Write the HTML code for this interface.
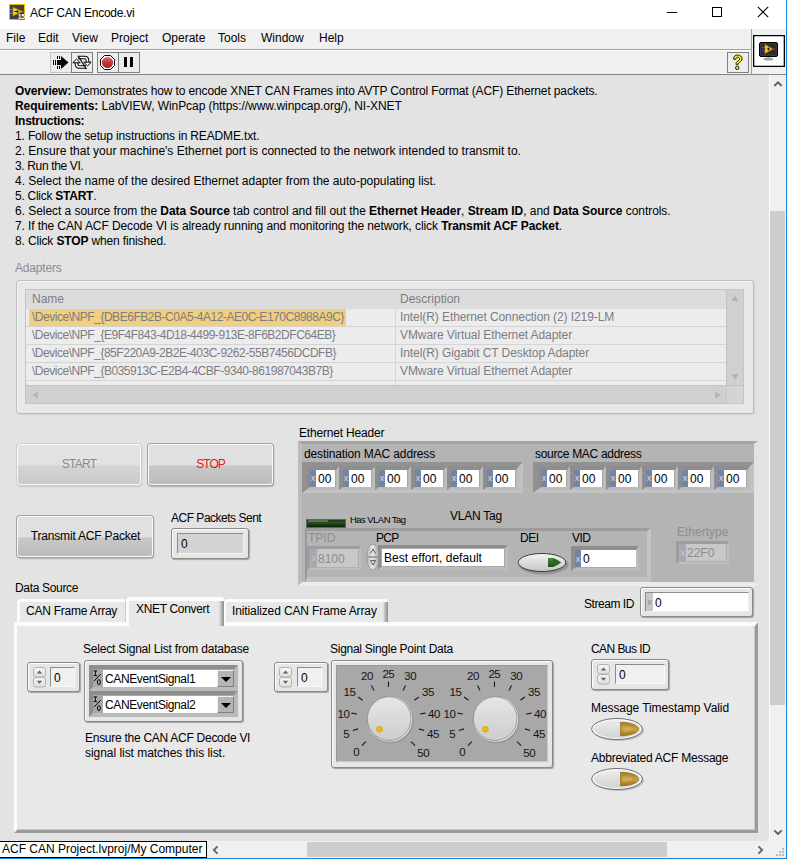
<!DOCTYPE html>
<html><head><meta charset="utf-8">
<style>
*{margin:0;padding:0;box-sizing:border-box}
html,body{width:787px;height:859px;overflow:hidden;background:#fff}
body{position:relative;font-family:"Liberation Sans",sans-serif;font-size:12px;color:#000}
.a{position:absolute}
.t{position:absolute;white-space:nowrap;line-height:15px}
b{font-weight:bold}
.btn{border:1px solid #fafafa;border-radius:3px;background:linear-gradient(#e0e0e0 0,#e0e0e0 52%,#c8c8c8 53%,#bcbcbc 100%);box-shadow:0 0 0 1px #a0a0a0,1px 2px 2px #b0b0b0}
.btn.dis{background:linear-gradient(#e2e2e2 0,#e2e2e2 52%,#d4d4d4 53%,#cacaca 100%);box-shadow:0 0 0 1px #cccccc,1px 2px 2px #c8c8c8}
.frm{border:1px solid #8a8a8a;border-radius:3px;background:#e6e6e6;box-shadow:inset 1px 1px 0 #fff,1px 1px 1px #a0a0a0}
.sunk4{background:#a8a8a8;border:4px solid #8e8e8e;border-right-color:#bababa;border-bottom-color:#bababa}
.sunk{background:#a8a8a8;border:2px solid #989898;border-right-color:#c0c0c0;border-bottom-color:#c0c0c0}

.tab{background:#e8e8e8;border-top:3px solid #fcfcfc;border-left:3px solid #fcfcfc;border-radius:4px 3px 0 0}
.fld{background:#f0f0f0;border:1px solid #8c8c8c;border-right-color:#f8f8f8;border-bottom-color:#f8f8f8}
.dd{width:17px;height:17px;background:#b4b4b4;border:1px solid #f0f0f0;border-right-color:#808080;border-bottom-color:#808080}
.dd:after{content:"";position:absolute;left:3px;top:6px;border-left:5px solid transparent;border-right:5px solid transparent;border-top:5px solid #000}
.io{font-family:"Liberation Serif",serif;font-size:9px;line-height:8px;width:10px;height:17px}
.sw{width:53px;height:22px;border-radius:50%;background:linear-gradient(#f4f4f4,#d0d0d0);border:1px solid #6a6a6a;box-shadow:1px 2px 2px #a0a0a0}
.sw i{position:absolute;left:29px;top:3px;width:19px;height:14px;border-radius:0 50% 50% 0;background:linear-gradient(#d8b050,#b08020);border:1px solid #8a6a20}
.rx{color:#dcdcdc;font-size:9px;line-height:18px;text-align:center}
.arr{background:#a8a8a8;border:4px solid #929292;border-right-color:#c2c2c2;border-bottom:3px solid #c2c2c2}
.mac{height:24px;background:#a8a8a8;border:4px solid #8e8e8e;border-right:3px solid #bcbcbc;border-bottom:3px solid #bcbcbc}
.mac i{position:absolute;left:0;top:0;width:6px;height:17px;background:#7484a4;color:#dcdcdc;font-style:normal;font-size:9px;line-height:17px;text-align:center}
.mac span{position:absolute;left:6px;top:0;height:17px;background:#fff;line-height:19px;padding-left:2px;overflow:hidden}
</style></head><body>
<!-- title bar -->
<div class="a" style="left:0;top:0;width:787px;height:29px;background:#fff"></div>
<svg class="a" style="left:9px;top:4px" width="16" height="16">
<rect x="0.5" y="0.5" width="15" height="15" fill="#404040" stroke="#f0b800"/>
<rect x="1" y="5" width="3" height="1.3" fill="#3a7ad8"/><rect x="1" y="8.5" width="3" height="1.3" fill="#3a7ad8"/>
<rect x="12.5" y="6.8" width="3" height="1.3" fill="#3a7ad8"/>
<path d="M4 3.2L13 7.5L4 11.8Z" fill="#f8d030" stroke="#c89000" stroke-width=".7"/>
<path d="M5.5 7.5H9M8 6.2L9.3 7.5L8 8.8" stroke="#000" stroke-width=".9" fill="none"/>
<rect x="8.5" y="10" width="7" height="5.5" fill="#404040"/>
<text x="8.7" y="15.3" font-family="Liberation Sans" font-size="6.8" font-weight="bold" letter-spacing="-.3" fill="#fff">15</text>
</svg>
<div class="t" style="left:30px;top:6px;font-size:12px;letter-spacing:-0.25px">ACF CAN Encode.vi</div>
<div class="a" style="left:667px;top:12px;width:10px;height:1px;background:#000"></div>
<div class="a" style="left:712px;top:7px;width:10px;height:10px;border:1px solid #000"></div>
<svg class="a" style="left:757px;top:6px" width="12" height="12"><path d="M0.8 0.8L11.2 11.2M11.2 0.8L0.8 11.2" stroke="#000" stroke-width="1.1"/></svg>
<!-- menu bar -->
<div class="a" style="left:0;top:29px;width:787px;height:46px;background:#f0f0f0"></div>
<div class="t" style="left:6px;top:31px;font-size:12px">File</div>
<div class="t" style="left:38px;top:31px;font-size:12px">Edit</div>
<div class="t" style="left:72px;top:31px;font-size:12px">View</div>
<div class="t" style="left:111px;top:31px;font-size:12px">Project</div>
<div class="t" style="left:162px;top:31px;font-size:12px">Operate</div>
<div class="t" style="left:218px;top:31px;font-size:12px">Tools</div>
<div class="t" style="left:261px;top:31px;font-size:12px">Window</div>
<div class="t" style="left:319px;top:31px;font-size:12px">Help</div>
<div class="a" style="left:0;top:49px;width:751px;height:1px;background:#a0a0a0"></div>
<div class="a" style="left:751px;top:29px;width:1px;height:46px;background:#a0a0a0"></div>
<div class="a" style="left:0;top:50px;width:751px;height:1px;background:#fcfcfc"></div>
<div class="a" style="left:0;top:74px;width:787px;height:1px;background:#858585"></div>
<!-- toolbar -->
<div class="a" style="left:50px;top:52px;width:22px;height:21px;border:1px solid #c4c4c4;background:#ececec"></div>
<div class="a" style="left:71px;top:52px;width:22px;height:21px;border:1px solid #7c7c7c;background:#ececec"></div>
<div class="a" style="left:97px;top:52px;width:22px;height:21px;border:1px solid #808080;background:#ececec"></div>
<div class="a" style="left:118px;top:52px;width:22px;height:21px;border:1px solid #808080;background:#ececec"></div>
<svg class="a" style="left:50px;top:52px" width="22" height="21">
<rect x="3" y="8" width="1" height="5" fill="#000"/><rect x="5" y="8" width="1" height="5" fill="#000"/>
<rect x="7" y="8" width="4" height="5" fill="#000"/>
<rect x="7" y="4" width="1" height="3" fill="#000"/><rect x="9" y="4" width="1" height="3" fill="#000"/>
<rect x="7" y="14" width="1" height="3" fill="#000"/><rect x="9" y="14" width="1" height="3" fill="#000"/>
<path d="M11 4L18.5 10.5L11 17Z" fill="#000"/>
</svg>
<svg class="a" style="left:71px;top:52px" width="22" height="21">
<path d="M7 5.5H13.5Q16.5 5.5 16.5 8.5V10" fill="none" stroke="#000" stroke-width="3.6"/>
<path d="M7 5.5H13.5Q16.5 5.5 16.5 8.5V10" fill="none" stroke="#fff" stroke-width="1.6"/>
<path d="M12.8 10.2H20.2L16.5 13.8Z" fill="#fff" stroke="#000" stroke-width="1"/>
<path d="M15 15H8.5Q5.5 15 5.5 12V10.8" fill="none" stroke="#000" stroke-width="3.6"/>
<path d="M15 15H8.5Q5.5 15 5.5 12V10.8" fill="none" stroke="#fff" stroke-width="1.6"/>
<path d="M1.8 10.8H9.2L5.5 7.2Z" fill="#fff" stroke="#000" stroke-width="1"/>
<path d="M7 4L15.5 17" stroke="#000" stroke-width="1.2"/>
</svg>
<svg class="a" style="left:97px;top:52px" width="22" height="21">
<defs><linearGradient id="rg" x1="0" y1="0" x2="0" y2="1"><stop offset="0" stop-color="#e07070"/><stop offset=".5" stop-color="#c03838"/><stop offset="1" stop-color="#a82020"/></linearGradient></defs>
<path d="M7.5 3.5H13.5L17.5 7.5V13.5L13.5 17.5H7.5L3.5 13.5V7.5Z" fill="#fff" stroke="#000" stroke-width="1"/>
<circle cx="10.5" cy="10.5" r="5.6" fill="url(#rg)"/>
</svg>
<svg class="a" style="left:118px;top:52px" width="22" height="21">
<rect x="6" y="5" width="3" height="10" fill="#000"/><rect x="12" y="5" width="3" height="10" fill="#000"/>
</svg>
<div class="a" style="left:727px;top:52px;width:22px;height:21px;border:1px solid #808080;background:#ececec"></div>
<svg class="a" style="left:727px;top:52px" width="22" height="21">
<path d="M6.5 7.2C6.5 4.5 8.3 3 10.7 3C13.2 3 15 4.5 15 6.8C15 8.8 13.6 9.7 12.4 10.4C11.6 10.9 11.3 11.3 11.3 12.3H9C9 10.8 9.4 10 10.8 9.1C11.9 8.4 12.6 7.9 12.6 6.9C12.6 5.9 11.9 5.2 10.7 5.2C9.5 5.2 8.9 6 8.9 7.2Z" fill="#ffff00" stroke="#000" stroke-width=".9"/>
<circle cx="10.2" cy="15.8" r="1.7" fill="#ffff00" stroke="#000" stroke-width=".9"/>
</svg>
<div class="a" style="left:753px;top:35px;width:32px;height:32px;border:1px solid #000;box-shadow:inset 0 0 0 .3px #000;background:#fff"></div>
<svg class="a" style="left:753px;top:35px" width="32" height="32">
<ellipse cx="15.5" cy="24" rx="5" ry="1.6" fill="#a0a0a0"/>
<rect x="14" y="21" width="3" height="3" fill="#b0b0b0"/>
<rect x="6.5" y="7.5" width="18" height="14" rx="1.5" fill="#3a3a3a" stroke="#000" stroke-width="1"/>
<rect x="8" y="9" width="15" height="10.5" fill="#2c2c2c"/>
<rect x="9" y="12" width="3" height="1" fill="#e02020"/><rect x="9" y="15" width="3" height="1" fill="#2040e0"/>
<rect x="19" y="13.5" width="3" height="1" fill="#e02020"/>
<path d="M12 9.5L19.5 14L12 18.5Z" fill="#f8c020" stroke="#e09000" stroke-width=".6"/>
<path d="M14 14H17M15.5 12.5V15.5" stroke="#000" stroke-width=".8"/>
</svg>
<!-- panel -->
<div class="a" style="left:0;top:75px;width:769px;height:766px;background:#e3e3e3"></div>
<!-- scrollbars -->
<div class="a" style="left:769px;top:75px;width:17px;height:783px;background:#f0f0f0;border-left:1px solid #fcfcfc"></div>
<div class="a" style="left:770px;top:211px;width:15px;height:494px;background:#cdcdcd"></div>
<svg class="a" style="left:773px;top:80px" width="10" height="8"><path d="M1.3 6L5 2.3L8.7 6" fill="none" stroke="#606060" stroke-width="1.8"/></svg>
<svg class="a" style="left:773px;top:829px" width="10" height="8"><path d="M1.3 1.3L5 5L8.7 1.3" fill="none" stroke="#606060" stroke-width="1.8"/></svg>
<div class="a" style="left:0;top:841px;width:786px;height:17px;background:#f0f0f0"></div>
<div class="a" style="left:307px;top:842px;width:360px;height:15px;background:#cdcdcd"></div>
<svg class="a" style="left:211px;top:845px" width="8" height="10"><path d="M6.5 1.3L2.8 5L6.5 8.7" fill="none" stroke="#606060" stroke-width="1.8"/></svg>
<svg class="a" style="left:757px;top:845px" width="8" height="10"><path d="M1.5 1.3L5.2 5L1.5 8.7" fill="none" stroke="#606060" stroke-width="1.8"/></svg>
<svg class="a" style="left:774px;top:846px" width="12" height="12"><g fill="#b8b8b8"><rect x="8" y="2" width="2" height="2"/><rect x="5" y="5" width="2" height="2"/><rect x="8" y="5" width="2" height="2"/><rect x="2" y="8" width="2" height="2"/><rect x="5" y="8" width="2" height="2"/><rect x="8" y="8" width="2" height="2"/></g></svg>
<div class="a" style="left:786px;top:0;width:1px;height:859px;background:#1883d7"></div>
<div class="a" style="left:0;top:858px;width:787px;height:1px;background:#1883d7"></div>

<!-- description -->
<div class="t" style="left:15px;top:84px;letter-spacing:-0.13px"><b>Overview:</b> Demonstrates how to encode XNET CAN Frames into AVTP Control Format (ACF) Ethernet packets.</div>
<div class="t" style="left:15px;top:99px;letter-spacing:-0.06px"><b>Requirements:</b> LabVIEW, WinPcap (https://www.winpcap.org/), NI-XNET</div>
<div class="t" style="left:15px;top:114px;letter-spacing:-0.26px"><b>Instructions:</b></div>
<div class="t" style="left:15px;top:129px;letter-spacing:-0.15px">1. Follow the setup instructions in README.txt.</div>
<div class="t" style="left:15px;top:144px;letter-spacing:-0.00px">2. Ensure that your machine's Ethernet port is connected to the network intended to transmit to.</div>
<div class="t" style="left:15px;top:159px;letter-spacing:-0.35px">3. Run the VI.</div>
<div class="t" style="left:15px;top:174px;letter-spacing:-0.03px">4. Select the name of the desired Ethernet adapter from the auto-populating list.</div>
<div class="t" style="left:15px;top:189px;letter-spacing:-0.26px">5. Click <b>START</b>.</div>
<div class="t" style="left:15px;top:204px;letter-spacing:-0.05px">6. Select a source from the <b>Data Source</b> tab control and fill out the <b>Ethernet Header</b>, <b>Stream ID</b>, and <b>Data Source</b> controls.</div>
<div class="t" style="left:15px;top:219px;letter-spacing:-0.10px">7. If the CAN ACF Decode VI is already running and monitoring the network, click <b>Transmit ACF Packet</b>.</div>
<div class="t" style="left:15px;top:234px;letter-spacing:-0.14px">8. Click <b>STOP</b> when finished.</div>


<!-- adapters -->
<div class="t" style="left:15px;top:261px;color:#8c8c8c;letter-spacing:-0.17px">Adapters</div>
<div class="a" style="left:16px;top:280px;width:738px;height:134px;background:#e8e8e8;border:1px solid #bdbdbd;border-radius:3px;box-shadow:inset 1px 1px 0 #f6f6f6, 1px 1px 1px #d0d0d0"></div>
<div class="a" style="left:25px;top:289px;width:719px;height:115px;background:#ececec;border:1px solid #c4c4c4"></div>
<div class="a" style="left:26px;top:290px;width:700px;height:19px;background:#dcdcdc"></div>
<div class="a" style="left:29px;top:309px;width:317px;height:17px;background:#f0d080"></div>
<div class="a" style="left:26px;top:326px;width:700px;height:1px;background:#d4d4d4"></div>
<div class="a" style="left:26px;top:344px;width:700px;height:1px;background:#d4d4d4"></div>
<div class="a" style="left:26px;top:362px;width:700px;height:1px;background:#d4d4d4"></div>
<div class="a" style="left:26px;top:380px;width:700px;height:1px;background:#d4d4d4"></div>
<div class="a" style="left:395px;top:309px;width:1px;height:76px;background:#d4d4d4"></div>
<div class="a" style="left:726px;top:290px;width:17px;height:95px;background:#d0d0d0;border-left:1px solid #c4c4c4"></div>
<div class="a" style="left:26px;top:385px;width:717px;height:18px;background:#d0d0d0;border-top:1px solid #c4c4c4"></div>
<div class="a" style="left:726px;top:385px;width:17px;height:18px;background:#d4d4d4;border-left:1px solid #c4c4c4;border-top:1px solid #c4c4c4"></div>
<svg class="a" style="left:730px;top:294px" width="10" height="8"><path d="M5 1L8.5 7H1.5Z" fill="#b4b4b4"/></svg>
<svg class="a" style="left:730px;top:373px" width="10" height="8"><path d="M5 7L8.5 1H1.5Z" fill="#b4b4b4"/></svg>
<svg class="a" style="left:31px;top:390px" width="8" height="10"><path d="M1 5L7 1.5V8.5Z" fill="#b4b4b4"/></svg>
<svg class="a" style="left:714px;top:390px" width="8" height="10"><path d="M7 5L1 1.5V8.5Z" fill="#b4b4b4"/></svg>
<div class="t" style="left:32px;top:292px;color:#7c7c84">Name</div>
<div class="t" style="left:400px;top:292px;color:#7c7c84">Description</div>
<div class="t" style="left:32px;top:310px;color:#7c7c84;letter-spacing:-0.47px">\Device\NPF_{DBE6FB2B-C0A5-4A12-AE0C-E170C8988A9C}</div>
<div class="t" style="left:32px;top:328px;color:#7c7c84;letter-spacing:-0.47px">\Device\NPF_{E9F4F843-4D18-4499-913E-8F6B2DFC64EB}</div>
<div class="t" style="left:32px;top:346px;color:#7c7c84;letter-spacing:-0.47px">\Device\NPF_{85F220A9-2B2E-403C-9262-55B7456DCDFB}</div>
<div class="t" style="left:32px;top:364px;color:#7c7c84;letter-spacing:-0.47px">\Device\NPF_{B035913C-E2B4-4CBF-9340-861987043B7B}</div>
<div class="t" style="left:400px;top:310px;color:#7c7c84;letter-spacing:-0.08px">Intel(R) Ethernet Connection (2) I219-LM</div>
<div class="t" style="left:400px;top:328px;color:#7c7c84;letter-spacing:-0.08px">VMware Virtual Ethernet Adapter</div>
<div class="t" style="left:400px;top:346px;color:#7c7c84;letter-spacing:-0.08px">Intel(R) Gigabit CT Desktop Adapter</div>
<div class="t" style="left:400px;top:364px;color:#7c7c84;letter-spacing:-0.08px">VMware Virtual Ethernet Adapter</div>

<!-- buttons -->
<div class="a btn dis" style="left:17px;top:444px;width:124px;height:41px"></div>
<div class="t" style="left:17px;top:457px;width:124px;text-align:center;color:#8a8a8a;letter-spacing:-0.70px">START</div>
<div class="a btn" style="left:148px;top:444px;width:125px;height:41px"></div>
<div class="t" style="left:148px;top:457px;width:125px;text-align:center;color:#f01020;letter-spacing:-1.00px">STOP</div>
<div class="a btn" style="left:17px;top:516px;width:136px;height:41px"></div>
<div class="t" style="left:17px;top:529px;width:137px;text-align:center;letter-spacing:-0.19px">Transmit ACF Packet</div>
<div class="t" style="left:171px;top:511px;letter-spacing:-0.49px">ACF Packets Sent</div>
<div class="a frm" style="left:171px;top:528px;width:78px;height:31px"></div>
<div class="a" style="left:177px;top:533px;width:67px;height:21px;background:#d4d4d4;border:1px solid #8c8c8c;border-right-color:#f4f4f4;border-bottom-color:#f4f4f4"></div>
<div class="t" style="left:181px;top:537px">0</div>

<!-- ethernet header cluster -->
<div class="t" style="left:299px;top:426px;letter-spacing:-0.19px">Ethernet Header</div>
<div class="a" style="left:298px;top:441px;width:460px;height:145px;background:#b4b4b4;border-style:solid;border-width:3px 4px 4px 4px;border-color:#a6a6a6 #e2e2e2 #ececec #bcbcbc"></div>
<div class="t" style="left:304px;top:447px;letter-spacing:-0.13px">destination MAC address</div>
<div class="t" style="left:535px;top:447px;letter-spacing:-0.31px">source MAC address</div>
<div class="a arr" style="left:302px;top:462px;width:221px;height:31px"></div>
<div class="a mac" style="left:306px;top:466px;width:33px"><i>x</i><span style="width:19px">00</span></div>
<div class="a mac" style="left:339px;top:466px;width:36px"><i>x</i><span style="width:22px">00</span></div>
<div class="a mac" style="left:375px;top:466px;width:36px"><i>x</i><span style="width:22px">00</span></div>
<div class="a mac" style="left:411px;top:466px;width:36px"><i>x</i><span style="width:22px">00</span></div>
<div class="a mac" style="left:447px;top:466px;width:36px"><i>x</i><span style="width:22px">00</span></div>
<div class="a mac" style="left:483px;top:466px;width:36px"><i>x</i><span style="width:22px">00</span></div>
<div class="a arr" style="left:533px;top:462px;width:221px;height:31px"></div>
<div class="a mac" style="left:537px;top:466px;width:33px"><i>x</i><span style="width:19px">00</span></div>
<div class="a mac" style="left:570px;top:466px;width:36px"><i>x</i><span style="width:22px">00</span></div>
<div class="a mac" style="left:606px;top:466px;width:36px"><i>x</i><span style="width:22px">00</span></div>
<div class="a mac" style="left:642px;top:466px;width:36px"><i>x</i><span style="width:22px">00</span></div>
<div class="a mac" style="left:678px;top:466px;width:36px"><i>x</i><span style="width:22px">00</span></div>
<div class="a mac" style="left:714px;top:466px;width:36px"><i>x</i><span style="width:22px">00</span></div>

<!-- VLAN -->
<div class="a" style="left:306px;top:519px;width:40px;height:9px;background:linear-gradient(#1c3a14,#2a5020 40%,#0c2008);border:1px solid #5a6a58"></div>
<div class="a" style="left:308px;top:520px;width:20px;height:2px;background:#6a8a60;border-radius:1px;opacity:.7"></div>
<div class="t" style="left:350px;top:512px;font-size:9.5px;letter-spacing:-0.55px">Has VLAN Tag</div>
<div class="t" style="left:450px;top:509px;letter-spacing:-0.24px">VLAN Tag</div>
<div class="a" style="left:305px;top:528px;width:346px;height:54px;background:#b4b4b4;border-style:solid;border-width:3px 4px 5px 2px;border-color:#9c9c9c #c4c4c4 #c2c2c2 #989898"></div>
<div class="t" style="left:308px;top:531px;color:#8e8e8e">TPID</div>
<div class="a" style="left:307px;top:546px;width:54px;height:24px;background:#b0b0b0;border:3px solid #9e9e9e;border-right:2px solid #bebebe;border-bottom:2px solid #bebebe"></div>
<div class="a" style="left:311px;top:549px;width:47px;height:18px;background:#c8c8c8"></div>
<div class="a rx" style="left:311px;top:549px;width:6px;height:18px;background:#a4a8b4;color:#c8c8c8">x</div>
<div class="t" style="left:318px;top:552px;color:#8c8c8c">8100</div>
<div class="t" style="left:376px;top:531px;letter-spacing:-0.65px">PCP</div>
<div class="a" style="left:378px;top:545px;width:130px;height:25px;background:#a8a8a8;border-style:solid;border-width:3px 3px 3px 3px;border-color:#8e8e8e #bcbcbc #bcbcbc #8e8e8e"></div>
<svg class="a" style="left:366px;top:544px" width="14" height="26"><defs><linearGradient id="pg" x1="0" y1="0" x2="1" y2="0"><stop offset="0" stop-color="#b8b8b8"/><stop offset=".45" stop-color="#e8e8e8"/><stop offset="1" stop-color="#a8a8a8"/></linearGradient></defs>
<path d="M7 0.5C11 0.5 13 6 13 12.5H1C1 6 3 0.5 7 0.5Z" fill="url(#pg)" stroke="#8a8a8a" stroke-width=".6"/>
<path d="M1 13.5H13C13 20 11 25.5 7 25.5C3 25.5 1 20 1 13.5Z" fill="url(#pg)" stroke="#8a8a8a" stroke-width=".6"/>
<path d="M4.5 9.5L7 5L9.5 9.5" fill="none" stroke="#505050" stroke-width=".9"/>
<path d="M4.5 16.5L7 21L9.5 16.5Z" fill="none" stroke="#505050" stroke-width=".9"/></svg>
<div class="a" style="left:382px;top:549px;width:122px;height:17px;background:#fff"></div>
<div class="t" style="left:384px;top:551px;letter-spacing:0.04px">Best effort, default</div>
<div class="t" style="left:520px;top:531px;letter-spacing:-0.5px">DEI</div>
<svg class="a" style="left:516px;top:551px" width="56" height="26"><defs><linearGradient id="dg" x1="0" y1="0" x2="0" y2="1"><stop offset="0" stop-color="#f4f4f4"/><stop offset="1" stop-color="#c4c4c4"/></linearGradient><linearGradient id="gg" x1="0" y1="0" x2="0" y2="1"><stop offset="0" stop-color="#4a8a3a"/><stop offset="1" stop-color="#1c5012"/></linearGradient></defs>
<ellipse cx="27.5" cy="13.5" rx="25" ry="10" fill="#7a7a7a" opacity=".55"/>
<ellipse cx="26" cy="11.5" rx="23.8" ry="9" fill="url(#dg)" stroke="#3c3c3c" stroke-width="1"/>
<path d="M32 7H37.5L45 11.5L37.5 16H32Z" fill="url(#gg)"/><path d="M37 7.2Q41 8 45 11.5Q41 15 37 15.8Z" fill="#2a6a20"/>
</svg>
<div class="t" style="left:572px;top:531px;letter-spacing:-0.6px">VID</div>
<div class="a" style="left:571px;top:546px;width:68px;height:25px;background:#a8a8a8;border-style:solid;border-width:4px 3px 3px 4px;border-color:#8e8e8e #bcbcbc #bcbcbc #8e8e8e"></div>
<div class="a" style="left:575px;top:550px;width:61px;height:17px;background:#fff"></div>
<div class="a rx" style="left:575px;top:550px;width:6px;height:17px;background:#7484a4">x</div>
<div class="t" style="left:583px;top:552px">0</div>
<div class="t" style="left:677px;top:525px;color:#8e8e8e">Ethertype</div>
<div class="a" style="left:676px;top:541px;width:53px;height:23px;background:#b0b0b0;border:3px solid #9e9e9e;border-right:2px solid #bebebe;border-bottom:2px solid #bebebe"></div>
<div class="a" style="left:680px;top:544px;width:46px;height:17px;background:#c8c8c8"></div>
<div class="a rx" style="left:680px;top:544px;width:6px;height:17px;background:#a4a8b4;color:#c8c8c8">x</div>
<div class="t" style="left:687px;top:546px;color:#8c8c8c">22F0</div>

<!-- stream id -->
<div class="t" style="left:584px;top:597px;letter-spacing:-0.45px">Stream ID</div>
<div class="a frm" style="left:640px;top:587px;width:113px;height:30px"></div>
<div class="a" style="left:645px;top:592px;width:104px;height:20px;background:#fff;border:1px solid #8c8c8c;border-right-color:#f0f0f0;border-bottom-color:#f0f0f0"></div>
<div class="a rx" style="left:646px;top:593px;width:7px;height:18px;background:#c8c8c8;color:#888">x</div>
<div class="t" style="left:655px;top:596px">0</div>

<!-- data source tab -->
<div class="t" style="left:15px;top:581px;letter-spacing:-0.33px">Data Source</div>
<div class="a" style="left:14px;top:622px;width:744px;height:211px;background:#e8e8e8;border-top:4px solid #fcfcfc;border-left:3px solid #fcfcfc;border-right:3px solid #9a9a9a;border-bottom:3px solid #9a9a9a;box-shadow:inset -1px -1px 0 #c8c8c8"></div>
<div class="a tab" style="left:17px;top:599px;width:109px;height:23px;border-right:1px solid #cacaca"></div>
<div class="t" style="left:26px;top:604px;letter-spacing:-0.24px">CAN Frame Array</div>
<div class="a tab" style="left:224px;top:599px;width:164px;height:23px;border-left-width:2px;background:linear-gradient(90deg,#e8e8e8 0,#e8e8e8 calc(100% - 5px),#cfcfcf calc(100% - 4px),#8c8c8c 100%)"></div>
<div class="t" style="left:232px;top:604px;letter-spacing:-0.12px">Initialized CAN Frame Array</div>
<div class="a tab" style="left:126px;top:597px;width:98px;height:29px;border-top-width:4px;border-bottom:0;background:linear-gradient(90deg,#e8e8e8 0,#e8e8e8 calc(100% - 5px),#cfcfcf calc(100% - 4px),#8c8c8c 100%)"></div>
<div class="t" style="left:136px;top:602px;letter-spacing:-0.33px">XNET Convert</div>

<!-- signal list -->
<div class="t" style="left:83px;top:642px;letter-spacing:-0.19px">Select Signal List from database</div>
<div class="a frm" style="left:27px;top:662px;width:53px;height:30px"></div>
<svg class="a" style="left:33px;top:667px" width="13" height="21"><defs><linearGradient id="sg1" x1="0" y1="0" x2="0" y2="1"><stop offset="0" stop-color="#f8f8f8"/><stop offset="1" stop-color="#dcdcdc"/></linearGradient></defs><rect x=".5" y=".5" width="12" height="9.5" rx="2.5" fill="url(#sg1)" stroke="#b0b0b0"/><rect x=".5" y="10.5" width="12" height="9.5" rx="2.5" fill="url(#sg1)" stroke="#b0b0b0"/><path d="M3.8 6.5H9.2L6.5 3.5Z" fill="#606060"/><path d="M3.8 13.8H9.2L6.5 16.8Z" fill="#606060"/></svg>
<div class="a fld" style="left:50px;top:667px;width:25px;height:20px"></div>
<div class="t" style="left:54px;top:671px">0</div>
<div class="a frm" style="left:84px;top:660px;width:159px;height:62px"></div>
<div class="a sunk4" style="left:89px;top:665px;width:149px;height:26px"></div>
<div class="a sunk4" style="left:89px;top:691px;width:149px;height:26px"></div>
<div class="a" style="left:103px;top:670px;width:114px;height:17px;background:#fff"></div>
<div class="a" style="left:103px;top:696px;width:114px;height:17px;background:#fff"></div>
<div class="a dd" style="left:217px;top:670px"></div>
<div class="a dd" style="left:217px;top:696px"></div>
<svg class="a" style="left:92px;top:670px" width="11" height="17"><path d="M1.6 0.9H5.2M3.4 0.9V5.6M1.6 5.6H5.2" stroke="#000" stroke-width=".9" fill="none"/><path d="M1.9 11.2L8.8 4" stroke="#000" stroke-width="1"/><ellipse cx="6.9" cy="12.1" rx="1.5" ry="2.4" fill="none" stroke="#000" stroke-width="1"/></svg>
<svg class="a" style="left:92px;top:696px" width="11" height="17"><path d="M1.6 0.9H5.2M3.4 0.9V5.6M1.6 5.6H5.2" stroke="#000" stroke-width=".9" fill="none"/><path d="M1.9 11.2L8.8 4" stroke="#000" stroke-width="1"/><ellipse cx="6.9" cy="12.1" rx="1.5" ry="2.4" fill="none" stroke="#000" stroke-width="1"/></svg>
<div class="t" style="left:105px;top:672px;letter-spacing:-0.39px">CANEventSignal1</div>
<div class="t" style="left:105px;top:698px;letter-spacing:-0.39px">CANEventSignal2</div>
<div class="t" style="left:85px;top:731px;letter-spacing:-0.27px">Ensure the CAN ACF Decode VI</div>
<div class="t" style="left:85px;top:746px;letter-spacing:-0.04px">signal list matches this list.</div>

<!-- signal single point data -->
<div class="t" style="left:330px;top:642px;letter-spacing:-0.27px">Signal Single Point Data</div>
<div class="a frm" style="left:274px;top:662px;width:54px;height:30px"></div>
<svg class="a" style="left:279px;top:667px" width="13" height="21"><defs><linearGradient id="sg2" x1="0" y1="0" x2="0" y2="1"><stop offset="0" stop-color="#f8f8f8"/><stop offset="1" stop-color="#dcdcdc"/></linearGradient></defs><rect x=".5" y=".5" width="12" height="9.5" rx="2.5" fill="url(#sg2)" stroke="#b0b0b0"/><rect x=".5" y="10.5" width="12" height="9.5" rx="2.5" fill="url(#sg2)" stroke="#b0b0b0"/><path d="M3.8 6.5H9.2L6.5 3.5Z" fill="#606060"/><path d="M3.8 13.8H9.2L6.5 16.8Z" fill="#606060"/></svg>
<div class="a fld" style="left:297px;top:667px;width:25px;height:20px"></div>
<div class="t" style="left:301px;top:671px">0</div>
<div class="a frm" style="left:331px;top:660px;width:222px;height:108px"></div>
<div class="a" style="left:336px;top:665px;width:212px;height:97px;background:#a8a8a8;border:1px solid #989898;border-right-color:#c8c8c8;border-bottom-color:#c8c8c8"></div>
<svg class="a" style="left:330px;top:660px" width="120" height="110"><line x1="35.87" y1="81.63" x2="31.98" y2="85.52" stroke="#1a1a1a" stroke-width="1.1"/><line x1="28.07" y1="68.89" x2="22.84" y2="70.59" stroke="#1a1a1a" stroke-width="1.1"/><line x1="26.89" y1="53.99" x2="21.46" y2="53.13" stroke="#1a1a1a" stroke-width="1.1"/><line x1="32.61" y1="40.19" x2="28.16" y2="36.96" stroke="#1a1a1a" stroke-width="1.1"/><line x1="43.97" y1="30.49" x2="41.48" y2="25.59" stroke="#1a1a1a" stroke-width="1.1"/><line x1="58.50" y1="27.00" x2="58.50" y2="21.50" stroke="#1a1a1a" stroke-width="1.1"/><line x1="73.03" y1="30.49" x2="75.52" y2="25.59" stroke="#1a1a1a" stroke-width="1.1"/><line x1="84.39" y1="40.19" x2="88.84" y2="36.96" stroke="#1a1a1a" stroke-width="1.1"/><line x1="90.11" y1="53.99" x2="95.54" y2="53.13" stroke="#1a1a1a" stroke-width="1.1"/><line x1="88.93" y1="68.89" x2="94.16" y2="70.59" stroke="#1a1a1a" stroke-width="1.1"/><line x1="81.13" y1="81.63" x2="85.02" y2="85.52" stroke="#1a1a1a" stroke-width="1.1"/><text x="26.1" y="96.1" font-family="Liberation Sans" font-size="11.5" letter-spacing="-0.5" text-anchor="middle" fill="#141414">0</text><text x="16.2" y="78.3" font-family="Liberation Sans" font-size="11.5" letter-spacing="-0.5" text-anchor="middle" fill="#141414">5</text><text x="13.4" y="58.0" font-family="Liberation Sans" font-size="11.5" letter-spacing="-0.5" text-anchor="middle" fill="#141414">10</text><text x="19.5" y="35.7" font-family="Liberation Sans" font-size="11.5" letter-spacing="-0.5" text-anchor="middle" fill="#141414">15</text><text x="37.0" y="20.4" font-family="Liberation Sans" font-size="11.5" letter-spacing="-0.5" text-anchor="middle" fill="#141414">20</text><text x="58.3" y="17.6" font-family="Liberation Sans" font-size="11.5" letter-spacing="-0.5" text-anchor="middle" fill="#141414">25</text><text x="80.2" y="20.4" font-family="Liberation Sans" font-size="11.5" letter-spacing="-0.5" text-anchor="middle" fill="#141414">30</text><text x="98.0" y="35.7" font-family="Liberation Sans" font-size="11.5" letter-spacing="-0.5" text-anchor="middle" fill="#141414">35</text><text x="103.9" y="57.7" font-family="Liberation Sans" font-size="11.5" letter-spacing="-0.5" text-anchor="middle" fill="#141414">40</text><text x="103.0" y="78.3" font-family="Liberation Sans" font-size="11.5" letter-spacing="-0.5" text-anchor="middle" fill="#141414">45</text><text x="93.2" y="97.1" font-family="Liberation Sans" font-size="11.5" letter-spacing="-0.5" text-anchor="middle" fill="#141414">50</text><defs><linearGradient id="kg0" x1="0" y1="0" x2="0" y2="1"><stop offset="0" stop-color="#e6e6e6"/><stop offset="1" stop-color="#cdcdcd"/></linearGradient></defs><circle cx="60.8" cy="60.5" r="23" fill="#8e8e8e" opacity=".55"/><circle cx="59.6" cy="59.0" r="22.6" fill="#fbfbfb"/><circle cx="59.2" cy="58.6" r="21.9" fill="url(#kg0)" stroke="#7c7c7c" stroke-width=".8"/><circle cx="49.4" cy="69.3" r="2.9" fill="#f5b800" stroke="#d89800" stroke-width=".6"/></svg>
<svg class="a" style="left:436px;top:660px" width="120" height="110"><line x1="35.87" y1="81.63" x2="31.98" y2="85.52" stroke="#1a1a1a" stroke-width="1.1"/><line x1="28.07" y1="68.89" x2="22.84" y2="70.59" stroke="#1a1a1a" stroke-width="1.1"/><line x1="26.89" y1="53.99" x2="21.46" y2="53.13" stroke="#1a1a1a" stroke-width="1.1"/><line x1="32.61" y1="40.19" x2="28.16" y2="36.96" stroke="#1a1a1a" stroke-width="1.1"/><line x1="43.97" y1="30.49" x2="41.48" y2="25.59" stroke="#1a1a1a" stroke-width="1.1"/><line x1="58.50" y1="27.00" x2="58.50" y2="21.50" stroke="#1a1a1a" stroke-width="1.1"/><line x1="73.03" y1="30.49" x2="75.52" y2="25.59" stroke="#1a1a1a" stroke-width="1.1"/><line x1="84.39" y1="40.19" x2="88.84" y2="36.96" stroke="#1a1a1a" stroke-width="1.1"/><line x1="90.11" y1="53.99" x2="95.54" y2="53.13" stroke="#1a1a1a" stroke-width="1.1"/><line x1="88.93" y1="68.89" x2="94.16" y2="70.59" stroke="#1a1a1a" stroke-width="1.1"/><line x1="81.13" y1="81.63" x2="85.02" y2="85.52" stroke="#1a1a1a" stroke-width="1.1"/><text x="26.1" y="96.1" font-family="Liberation Sans" font-size="11.5" letter-spacing="-0.5" text-anchor="middle" fill="#141414">0</text><text x="16.2" y="78.3" font-family="Liberation Sans" font-size="11.5" letter-spacing="-0.5" text-anchor="middle" fill="#141414">5</text><text x="13.4" y="58.0" font-family="Liberation Sans" font-size="11.5" letter-spacing="-0.5" text-anchor="middle" fill="#141414">10</text><text x="19.5" y="35.7" font-family="Liberation Sans" font-size="11.5" letter-spacing="-0.5" text-anchor="middle" fill="#141414">15</text><text x="37.0" y="20.4" font-family="Liberation Sans" font-size="11.5" letter-spacing="-0.5" text-anchor="middle" fill="#141414">20</text><text x="58.3" y="17.6" font-family="Liberation Sans" font-size="11.5" letter-spacing="-0.5" text-anchor="middle" fill="#141414">25</text><text x="80.2" y="20.4" font-family="Liberation Sans" font-size="11.5" letter-spacing="-0.5" text-anchor="middle" fill="#141414">30</text><text x="98.0" y="35.7" font-family="Liberation Sans" font-size="11.5" letter-spacing="-0.5" text-anchor="middle" fill="#141414">35</text><text x="103.9" y="57.7" font-family="Liberation Sans" font-size="11.5" letter-spacing="-0.5" text-anchor="middle" fill="#141414">40</text><text x="103.0" y="78.3" font-family="Liberation Sans" font-size="11.5" letter-spacing="-0.5" text-anchor="middle" fill="#141414">45</text><text x="93.2" y="97.1" font-family="Liberation Sans" font-size="11.5" letter-spacing="-0.5" text-anchor="middle" fill="#141414">50</text><defs><linearGradient id="kg1" x1="0" y1="0" x2="0" y2="1"><stop offset="0" stop-color="#e6e6e6"/><stop offset="1" stop-color="#cdcdcd"/></linearGradient></defs><circle cx="60.8" cy="60.5" r="23" fill="#8e8e8e" opacity=".55"/><circle cx="59.6" cy="59.0" r="22.6" fill="#fbfbfb"/><circle cx="59.2" cy="58.6" r="21.9" fill="url(#kg1)" stroke="#7c7c7c" stroke-width=".8"/><circle cx="49.4" cy="69.3" r="2.9" fill="#f5b800" stroke="#d89800" stroke-width=".6"/></svg>

<!-- right column -->
<div class="t" style="left:591px;top:642px;letter-spacing:-0.56px">CAN Bus ID</div>
<div class="a frm" style="left:591px;top:659px;width:78px;height:31px"></div>
<svg class="a" style="left:597px;top:664px" width="13" height="21"><defs><linearGradient id="sg3" x1="0" y1="0" x2="0" y2="1"><stop offset="0" stop-color="#f8f8f8"/><stop offset="1" stop-color="#dcdcdc"/></linearGradient></defs><rect x=".5" y=".5" width="12" height="9.5" rx="2.5" fill="url(#sg3)" stroke="#b0b0b0"/><rect x=".5" y="10.5" width="12" height="9.5" rx="2.5" fill="url(#sg3)" stroke="#b0b0b0"/><path d="M3.8 6.5H9.2L6.5 3.5Z" fill="#606060"/><path d="M3.8 13.8H9.2L6.5 16.8Z" fill="#606060"/></svg>
<div class="a fld" style="left:615px;top:664px;width:50px;height:20px"></div>
<div class="t" style="left:619px;top:668px">0</div>
<div class="t" style="left:591px;top:701px;letter-spacing:-0.08px">Message Timestamp Valid</div>
<svg class="a" style="left:591px;top:718px" width="56" height="26"><defs><linearGradient id="swg1" x1="0" y1="0" x2="0" y2="1"><stop offset="0" stop-color="#ececec"/><stop offset="1" stop-color="#d4d4d4"/></linearGradient><linearGradient id="gold1" x1="0" y1="0" x2="0" y2="1"><stop offset="0" stop-color="#a87e20"/><stop offset=".5" stop-color="#c8a040"/><stop offset="1" stop-color="#a07818"/></linearGradient></defs><ellipse cx="27.5" cy="12.5" rx="25.5" ry="10.5" fill="#9a9a9a" opacity=".5"/><ellipse cx="26" cy="11" rx="25.3" ry="10.5" fill="#fafafa" stroke="#6e6e6e" stroke-width="1"/><ellipse cx="26" cy="11" rx="23.5" ry="8.8" fill="url(#swg1)"/><path d="M29.5 4.3C38.5 4.3 47.5 7 47.5 11C47.5 15 38.5 17.8 29.5 17.8Z" fill="url(#gold1)" stroke="#8c6a1c" stroke-width=".7"/><path d="M32 8.3C37 8.3 42 9.5 42 11C42 12.5 37 13.7 32 13.7Z" fill="#d8b868" opacity=".5"/></svg>
<div class="t" style="left:591px;top:751px;letter-spacing:-0.24px">Abbreviated ACF Message</div>
<svg class="a" style="left:591px;top:768px" width="56" height="26"><defs><linearGradient id="swg2" x1="0" y1="0" x2="0" y2="1"><stop offset="0" stop-color="#ececec"/><stop offset="1" stop-color="#d4d4d4"/></linearGradient><linearGradient id="gold2" x1="0" y1="0" x2="0" y2="1"><stop offset="0" stop-color="#a87e20"/><stop offset=".5" stop-color="#c8a040"/><stop offset="1" stop-color="#a07818"/></linearGradient></defs><ellipse cx="27.5" cy="12.5" rx="25.5" ry="10.5" fill="#9a9a9a" opacity=".5"/><ellipse cx="26" cy="11" rx="25.3" ry="10.5" fill="#fafafa" stroke="#6e6e6e" stroke-width="1"/><ellipse cx="26" cy="11" rx="23.5" ry="8.8" fill="url(#swg2)"/><path d="M29.5 4.3C38.5 4.3 47.5 7 47.5 11C47.5 15 38.5 17.8 29.5 17.8Z" fill="url(#gold2)" stroke="#8c6a1c" stroke-width=".7"/><path d="M32 8.3C37 8.3 42 9.5 42 11C42 12.5 37 13.7 32 13.7Z" fill="#d8b868" opacity=".5"/></svg>

<!-- status bar -->
<div class="a" style="left:-1px;top:841px;width:208px;height:17px;background:#fff;border:1px solid #000"></div>
<div class="t" style="left:2px;top:842px;letter-spacing:-0.01px">ACF CAN Project.lvproj/My Computer</div>
</body></html>
